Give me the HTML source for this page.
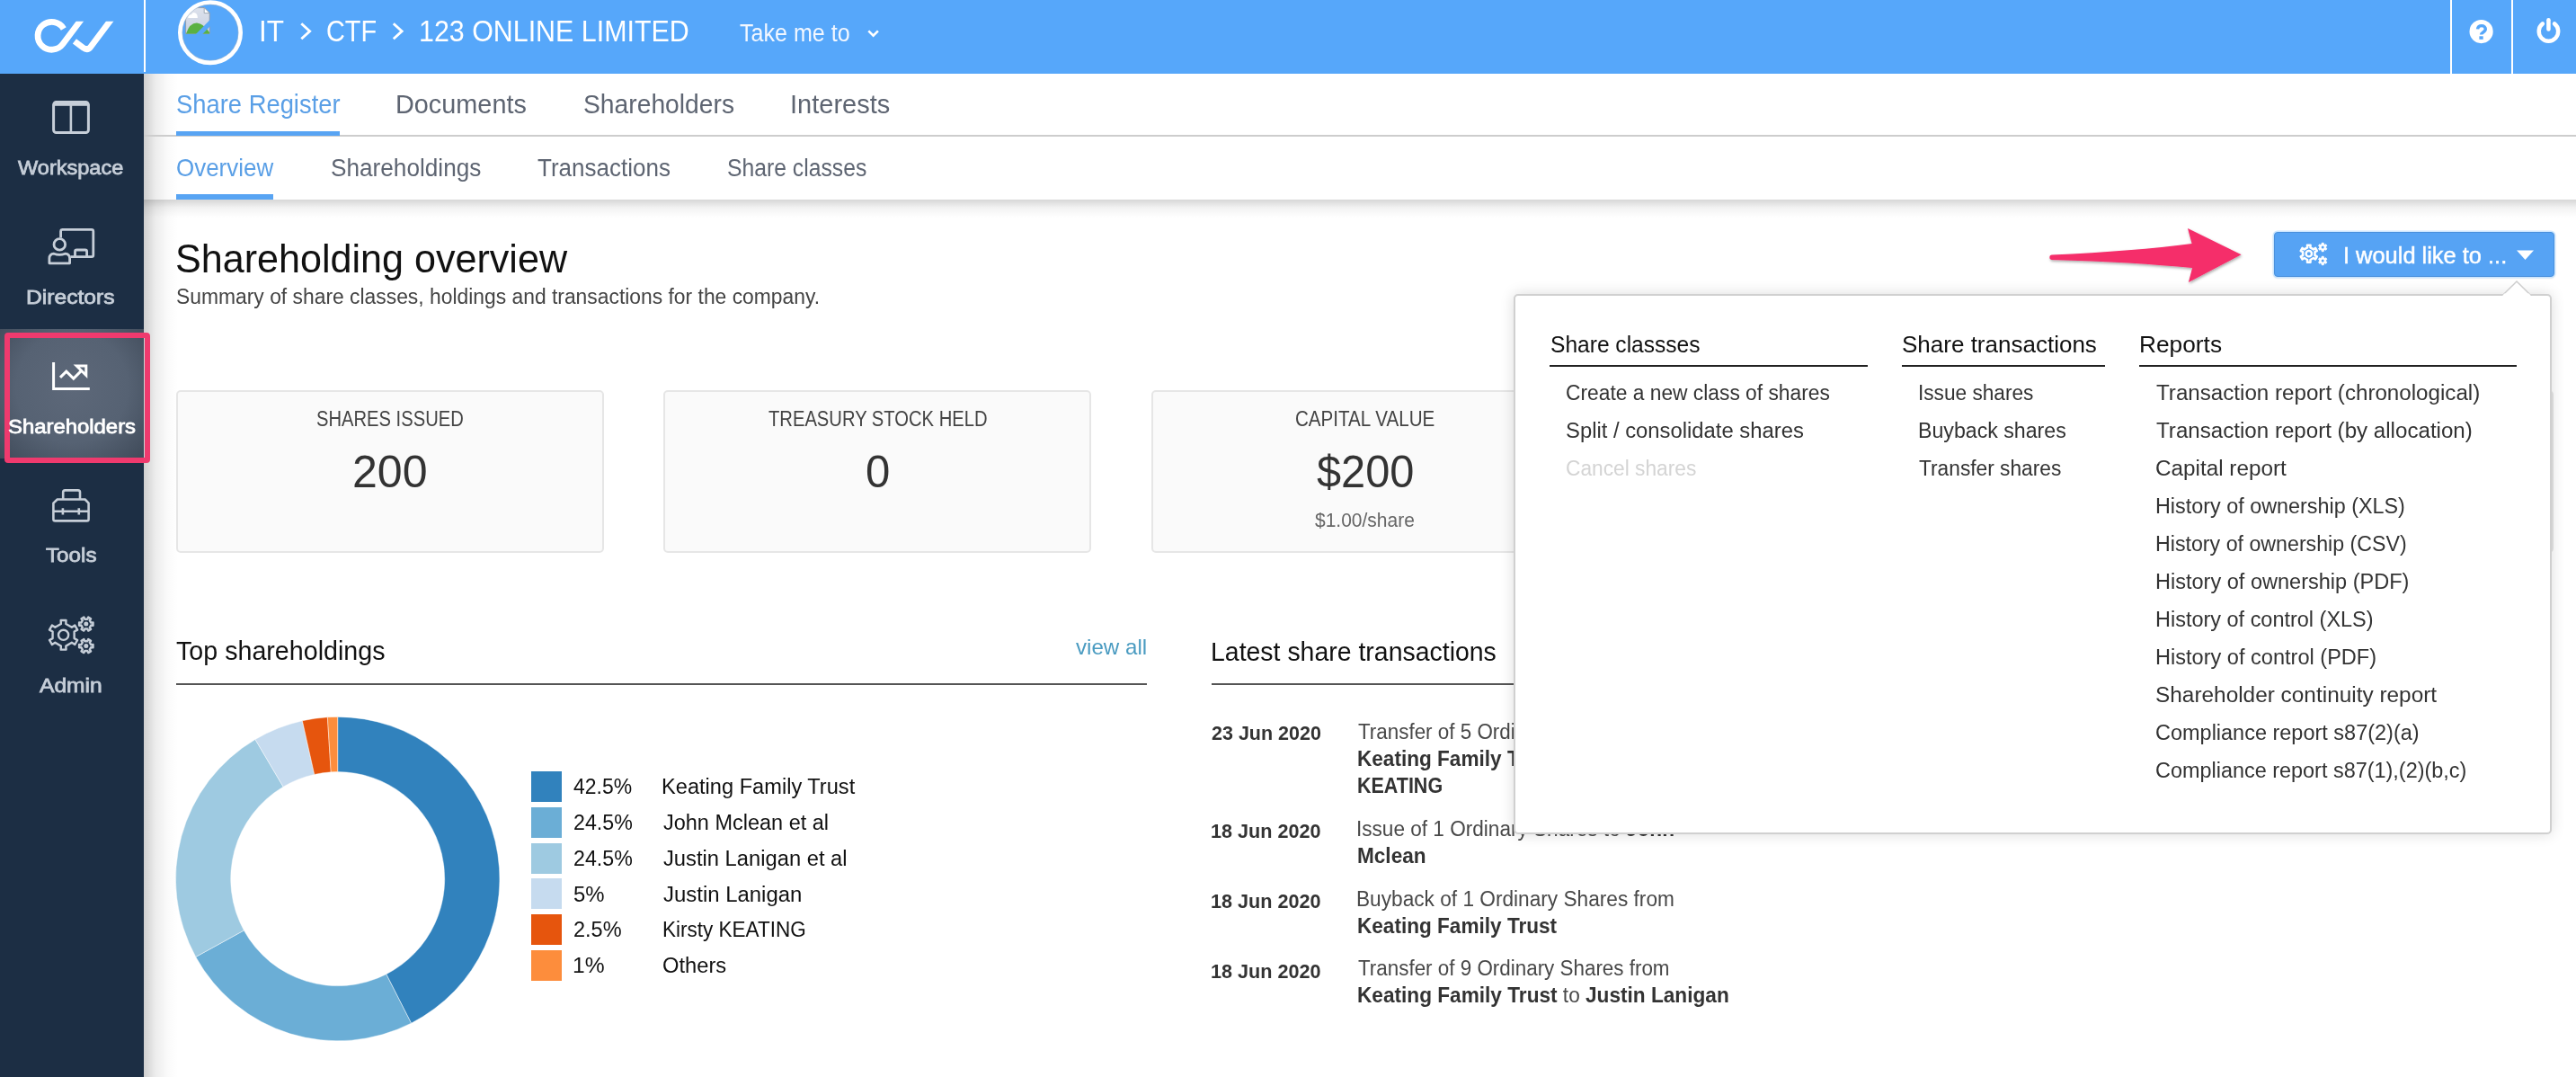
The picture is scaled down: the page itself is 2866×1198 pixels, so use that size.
<!DOCTYPE html><html><head><meta charset="utf-8"><style>
html,body{margin:0;padding:0}
body{width:2866px;height:1198px;overflow:hidden;position:relative;background:#fff;font-family:"Liberation Sans",sans-serif}
.t{position:absolute;white-space:nowrap;transform-origin:0 0}
.t b{font-weight:bold}
.a{position:absolute}
svg.full{position:absolute;left:0;top:0;width:2866px;height:1198px;overflow:visible}
</style></head><body>
<div class="a" style="left:0;top:0;width:2866px;height:82px;background:#56A7FA"></div>
<div class="a" style="left:160px;top:0;width:2px;height:80px;background:#fff"></div>
<div class="a" style="left:2726px;top:0;width:2px;height:82px;background:#fff"></div>
<div class="a" style="left:2794px;top:0;width:2px;height:82px;background:#fff"></div>
<div class="a" style="left:0;top:82px;width:160px;height:1116px;background:#1C2E44"></div>
<div class="a" style="left:0;top:366px;width:160px;height:144px;background:radial-gradient(ellipse at 50% 45%,#5D6879 0%,#566273 55%,#3F4A59 100%)"></div>
<div class="a" style="left:160px;top:82px;width:38px;height:1116px;background:linear-gradient(to right,rgba(0,0,0,0.19),rgba(0,0,0,0.07) 35%,rgba(0,0,0,0.02) 70%,rgba(0,0,0,0))"></div>
<div class="a" style="left:160px;top:150px;width:2706px;height:2px;background:#CDCDCD"></div>
<div class="a" style="left:160px;top:222px;width:2706px;height:20px;background:linear-gradient(to bottom,rgba(0,0,0,0.16),rgba(0,0,0,0.05) 45%,rgba(0,0,0,0))"></div>
<div class="a" style="left:196px;top:146px;width:182px;height:5px;background:#58A4F3"></div>
<div class="a" style="left:196px;top:216px;width:108px;height:6px;background:#58A4F3"></div>
<div class="a" style="left:5px;top:370px;width:150px;height:133px;border:6px solid #EF3A6E;border-radius:4px"></div>
<svg class="full" viewBox="0 0 2866 1198"><defs><clipPath id="lc"><path d="M0,0 L79,0 L79,23.65 L200,23.65 L200,80 L0,80 Z"/></clipPath></defs><g fill="none" stroke="#fff" stroke-width="6.8" stroke-linecap="butt" clip-path="url(#lc)"><path d="M70.8,31.93 A15.45,15.45 0 1 0 69.86,49.07 L92.4,19.0"/><path d="M82.9,45.9 L92.57,53.15 Q97.37,56.75 100.97,51.95 L125.7,19.0"/></g><defs><linearGradient id="bi" x1="0" y1="0" x2="0" y2="1"><stop offset="0" stop-color="#DDE2EC"/><stop offset="1" stop-color="#C9D1E2"/></linearGradient></defs><defs><clipPath id="avc"><circle cx="234" cy="36.2" r="31.6"/></clipPath></defs><g clip-path="url(#avc)"><path d="M206.6,8.6 L227.2,8.6 L233.2,14.6 L233.2,37.4 L206.6,37.4 Z" fill="url(#bi)" stroke="#8E99A6" stroke-width="0.9"/><path d="M227.2,8.6 L227.2,14.6 L233.2,14.6 Z" fill="#fff" stroke="#8E99A6" stroke-width="0.8"/><path d="M209.3,19.9 Q209.3,16 212.8,16.3 Q214.3,13.3 217.4,14.4 Q219.9,15.6 219.8,19.9 Z" fill="#fff"/><path d="M207,37.4 Q211,25.3 219,25.4 Q226.5,26 233,36 L233,37.4 Z" fill="#5AB142"/><path d="M217.6,38.2 L234,21.8 L234,29.1 L225,38.2 Z" fill="#56A7FA"/></g><circle cx="234" cy="36.2" r="31.2" fill="none" stroke="#A9B8C8" stroke-width="1" opacity="0.7"/><circle cx="234" cy="36.2" r="33.7" fill="none" stroke="#fff" stroke-width="4.6"/><g fill="none" stroke="#fff" stroke-width="2.9" stroke-linecap="butt" stroke-linejoin="miter"><path d="M335.3,26.2 L344.6,34.7 L335.3,43.2"/><path d="M437.8,26.2 L447.1,34.7 L437.8,43.2"/></g><path d="M966.3,34.3 L971.6,39.6 L976.9,34.3" fill="none" stroke="#fff" stroke-width="2.6"/><circle cx="2760.6" cy="35.1" r="13.1" fill="#fff"/><path d="M2756.5,32.4 C2756.8,30 2758.6,28.6 2761,28.6 C2763.6,28.6 2765.3,30.2 2765.3,32.3 C2765.3,34.3 2763.9,35.2 2762.6,36 C2761.3,36.8 2760.5,37.3 2760.5,38.6" fill="none" stroke="#56A7FA" stroke-width="3.4"/><rect x="2758.4" y="40.3" width="4.3" height="3.5" fill="#56A7FA"/><path d="M2828.85,26.4 A10.75,10.75 0 1 0 2842.05,26.4" fill="none" stroke="#fff" stroke-width="4.5" stroke-linecap="round"/><path d="M2835.45,22.3 L2835.45,32.6" fill="none" stroke="#fff" stroke-width="4.5" stroke-linecap="round"/><g fill="none" stroke="#C6CED8" stroke-width="3"><rect x="59.6" y="113.6" width="38.8" height="34" rx="3"/><rect x="59.6" y="113.6" width="38.8" height="4.2" fill="#C6CED8" stroke="none"/><path d="M78.9,116 L78.9,146" stroke-width="2.6"/></g><g fill="none" stroke="#C6CED8" stroke-width="2.8" stroke-linejoin="round"><path d="M67.6,264.5 L67.6,257.2 Q67.6,255.3 69.5,255.3 L102,255.3 Q103.8,255.3 103.8,257.2 L103.8,283.8 Q103.8,285.7 102,285.7 L78.6,285.7"/><circle cx="66.3" cy="271.9" r="6.3"/><path d="M54.9,292.8 L54.9,287.5 Q54.9,282.6 60,282.2 Q66.2,284.6 72.4,282.2 Q77.6,282.6 77.6,287.5 L77.6,292.8 Z"/><path d="M83.5,285.5 L83.5,279.8 Q83.5,278 85.3,278 L94.8,278 Q96.6,278 96.6,279.8 L96.6,285.5"/></g><g fill="none" stroke="#fff" stroke-width="3" stroke-linejoin="miter"><path d="M59.6,403 L59.6,432.6 L99.8,432.6"/><path d="M67,419.9 L73.8,413.2 L81.8,421.1 L91,411.9"/><path d="M85.2,407 L95.8,407 L95.8,417.5 Z"/></g><g fill="none" stroke="#C6CED8" stroke-width="2.6" stroke-linejoin="round"><path d="M70.2,555.3 L70.2,547.6 Q70.2,545.4 72.4,545.4 L86.8,545.4 Q89,545.4 89,547.6 L89,555.3"/><path d="M63.8,555.5 L94.6,555.5 L98.6,559.6 L98.6,577.4 Q98.6,579.4 96.6,579.4 L61.4,579.4 Q59.4,579.4 59.4,577.4 L59.4,559.6 Z"/><path d="M59.4,568.7 L98.6,568.7 M69.9,565.2 L69.9,572.6 M87.8,565.2 L87.8,572.6"/></g><path d="M67.85,694.00 L67.69,689.96 L73.51,689.96 L73.35,694.00 L79.87,697.77 L83.30,695.61 L86.21,700.64 L82.62,702.53 L82.62,710.07 L86.21,711.96 L83.30,716.99 L79.87,714.83 L73.35,718.60 L73.51,722.64 L67.69,722.64 L67.85,718.60 L61.33,714.83 L57.90,716.99 L54.99,711.96 L58.58,710.07 L58.58,702.53 L54.99,700.64 L57.90,695.61 L61.33,697.77 Z" fill="none" stroke="#C6CED8" stroke-width="2.40" stroke-linejoin="round"/><circle cx="70.60" cy="706.30" r="5.60" fill="none" stroke="#C6CED8" stroke-width="2.40"/><path d="M101.21,692.65 L103.53,692.46 L103.53,695.74 L101.21,695.55 L99.76,698.06 L101.09,699.97 L98.24,701.61 L97.25,699.51 L94.35,699.51 L93.36,701.61 L90.51,699.97 L91.84,698.06 L90.39,695.55 L88.07,695.74 L88.07,692.46 L90.39,692.65 L91.84,690.14 L90.51,688.23 L93.36,686.59 L94.35,688.69 L97.25,688.69 L98.24,686.59 L101.09,688.23 L99.76,690.14 Z" fill="none" stroke="#C6CED8" stroke-width="2.40" stroke-linejoin="round"/><circle cx="95.80" cy="694.10" r="2.50" fill="#C6CED8"/><path d="M101.21,717.15 L103.53,716.96 L103.53,720.24 L101.21,720.05 L99.76,722.56 L101.09,724.47 L98.24,726.11 L97.25,724.01 L94.35,724.01 L93.36,726.11 L90.51,724.47 L91.84,722.56 L90.39,720.05 L88.07,720.24 L88.07,716.96 L90.39,717.15 L91.84,714.64 L90.51,712.73 L93.36,711.09 L94.35,713.19 L97.25,713.19 L98.24,711.09 L101.09,712.73 L99.76,714.64 Z" fill="none" stroke="#C6CED8" stroke-width="2.40" stroke-linejoin="round"/><circle cx="95.80" cy="718.60" r="2.50" fill="#C6CED8"/></svg>
<div class="t" style="left:20.24px;top:174.89px;font-size:22.69px;line-height:22.69px;color:#C6CED8;transform:scaleX(1.0375);"><b style="font-weight:normal;-webkit-text-stroke:0.80px currentColor;">Workspace</b></div>
<div class="t" style="left:29.39px;top:318.99px;font-size:22.69px;line-height:22.69px;color:#C6CED8;transform:scaleX(1.0862);"><b style="font-weight:normal;-webkit-text-stroke:0.80px currentColor;">Directors</b></div>
<div class="t" style="left:9.29px;top:463.29px;font-size:22.69px;line-height:22.69px;color:#FFFFFF;transform:scaleX(1.0526);"><b style="font-weight:normal;-webkit-text-stroke:0.80px currentColor;">Shareholders</b></div>
<div class="t" style="left:50.81px;top:606.49px;font-size:22.69px;line-height:22.69px;color:#C6CED8;transform:scaleX(1.0677);"><b style="font-weight:normal;-webkit-text-stroke:0.80px currentColor;">Tools</b></div>
<div class="t" style="left:44.35px;top:751.49px;font-size:22.69px;line-height:22.69px;color:#C6CED8;transform:scaleX(1.0843);"><b style="font-weight:normal;-webkit-text-stroke:0.80px currentColor;">Admin</b></div>
<div class="t" style="left:287.59px;top:18.05px;font-size:33.60px;line-height:33.60px;color:#fff;transform:scaleX(0.9385);">IT</div>
<div class="t" style="left:362.74px;top:18.05px;font-size:33.60px;line-height:33.60px;color:#fff;transform:scaleX(0.8604);">CTF</div>
<div class="t" style="left:465.64px;top:17.85px;font-size:33.60px;line-height:33.60px;color:#fff;transform:scaleX(0.9053);">123 ONLINE LIMITED</div>
<div class="t" style="left:823.47px;top:22.11px;font-size:28.22px;line-height:28.22px;color:#F2F7FF;transform:scaleX(0.8891);">Take me to</div>
<div class="t" style="left:195.66px;top:102.22px;font-size:28.80px;line-height:28.80px;color:#5A9FE6;transform:scaleX(0.9506);">Share Register</div>
<div class="t" style="left:440.10px;top:102.22px;font-size:28.80px;line-height:28.80px;color:#5E6572;transform:scaleX(1.0014);">Documents</div>
<div class="t" style="left:648.72px;top:102.22px;font-size:28.80px;line-height:28.80px;color:#5E6572;transform:scaleX(0.9811);">Shareholders</div>
<div class="t" style="left:878.78px;top:102.22px;font-size:28.80px;line-height:28.80px;color:#5E6572;transform:scaleX(1.0075);">Interests</div>
<div class="t" style="left:195.73px;top:173.22px;font-size:27.49px;line-height:27.49px;color:#5A9FE6;transform:scaleX(0.9444);">Overview</div>
<div class="t" style="left:367.51px;top:173.22px;font-size:27.49px;line-height:27.49px;color:#5E6572;transform:scaleX(0.9522);">Shareholdings</div>
<div class="t" style="left:598.38px;top:173.22px;font-size:27.49px;line-height:27.49px;color:#5E6572;transform:scaleX(0.9470);">Transactions</div>
<div class="t" style="left:809.48px;top:173.22px;font-size:27.49px;line-height:27.49px;color:#5E6572;transform:scaleX(0.8997);">Share classes</div>
<div class="t" style="left:194.69px;top:264.60px;font-size:45.24px;line-height:45.24px;color:#111;transform:scaleX(0.9528);">Shareholding overview</div>
<div class="t" style="left:195.54px;top:317.66px;font-size:24.73px;line-height:24.73px;color:#444;transform:scaleX(0.9246);">Summary of share classes, holdings and transactions for the company.</div>
<div class="a" style="left:196.00px;top:434px;width:472px;height:176.5px;border:2px solid #E6E6E6;border-radius:5px;background:#FAFAFA"></div>
<div class="t" style="left:352.04px;top:454.03px;font-size:24.29px;line-height:24.29px;color:#444;transform:scaleX(0.8312);">SHARES ISSUED</div>
<div class="t" style="left:391.87px;top:499.79px;font-size:50.56px;line-height:50.56px;color:#333;transform:scaleX(0.9912);">200</div>
<div class="a" style="left:738.25px;top:434px;width:472px;height:176.5px;border:2px solid #E6E6E6;border-radius:5px;background:#FAFAFA"></div>
<div class="t" style="left:854.64px;top:454.03px;font-size:24.29px;line-height:24.29px;color:#444;transform:scaleX(0.8318);">TREASURY STOCK HELD</div>
<div class="t" style="left:962.60px;top:499.79px;font-size:50.56px;line-height:50.56px;color:#333;transform:scaleX(0.9712);">0</div>
<div class="a" style="left:1280.50px;top:434px;width:472px;height:176.5px;border:2px solid #E6E6E6;border-radius:5px;background:#FAFAFA"></div>
<div class="t" style="left:1440.69px;top:454.03px;font-size:24.29px;line-height:24.29px;color:#444;transform:scaleX(0.8481);">CAPITAL VALUE</div>
<div class="t" style="left:1464.92px;top:499.79px;font-size:50.56px;line-height:50.56px;color:#333;transform:scaleX(0.9646);">$200</div>
<div class="t" style="left:1463.42px;top:567.39px;font-size:22.69px;line-height:22.69px;color:#666;transform:scaleX(0.9250);">$1.00/share</div>
<div class="a" style="left:1822.75px;top:434px;width:472px;height:176.5px;border:2px solid #E6E6E6;border-radius:5px;background:#FAFAFA"></div>
<div class="a" style="left:2365.00px;top:434px;width:472px;height:176.5px;border:2px solid #E6E6E6;border-radius:5px;background:#FAFAFA"></div>
<div class="t" style="left:196.42px;top:709.10px;font-size:29.82px;line-height:29.82px;color:#111;transform:scaleX(0.9609);">Top shareholdings</div>
<div class="t" style="left:1197.30px;top:708.27px;font-size:24.01px;line-height:24.01px;color:#4A9BC1;transform:scaleX(1.0052);">view all</div>
<div class="a" style="left:196px;top:760px;width:1080px;height:2px;background:#555"></div>
<div class="t" style="left:1346.71px;top:709.75px;font-size:29.82px;line-height:29.82px;color:#111;transform:scaleX(0.9542);">Latest share transactions</div>
<div class="a" style="left:1348px;top:760px;width:1488px;height:2px;background:#555"></div>
<svg class="full" viewBox="0 0 2866 1198"><path d="M375.70,797.40 A180.20,180.20 0 0 1 457.51,1138.16 L429.72,1083.63 A119.00,119.00 0 0 0 375.70,858.60 Z" fill="#3182BD" stroke="#fff" stroke-width="0.45"/><path d="M457.51,1138.16 A180.20,180.20 0 0 1 217.79,1064.41 L271.42,1034.93 A119.00,119.00 0 0 0 429.72,1083.63 Z" fill="#6BAED6" stroke="#fff" stroke-width="0.45"/><path d="M217.79,1064.41 A180.20,180.20 0 0 1 283.97,822.49 L315.12,875.17 A119.00,119.00 0 0 0 271.42,1034.93 Z" fill="#9ECAE1" stroke="#fff" stroke-width="0.45"/><path d="M283.97,822.49 A180.20,180.20 0 0 1 336.39,801.74 L349.74,861.47 A119.00,119.00 0 0 0 315.12,875.17 Z" fill="#C6DBEF" stroke="#fff" stroke-width="0.45"/><path d="M336.39,801.74 A180.20,180.20 0 0 1 364.39,797.76 L368.23,858.83 A119.00,119.00 0 0 0 349.74,861.47 Z" fill="#E6550D" stroke="#fff" stroke-width="0.45"/><path d="M364.39,797.76 A180.20,180.20 0 0 1 375.70,797.40 L375.70,858.60 A119.00,119.00 0 0 0 368.23,858.83 Z" fill="#FD8D3C" stroke="#fff" stroke-width="0.45"/></svg>
<div class="a" style="left:591px;top:858.00px;width:34px;height:34px;background:#3182BD"></div>
<div class="t" style="left:638.47px;top:864.43px;font-size:23.71px;line-height:23.71px;color:#111;transform:scaleX(0.9681);">42.5%</div>
<div class="t" style="left:736.46px;top:864.43px;font-size:23.71px;line-height:23.71px;color:#111;transform:scaleX(0.9963);">Keating Family Trust</div>
<div class="a" style="left:591px;top:897.76px;width:34px;height:34px;background:#6BAED6"></div>
<div class="t" style="left:637.78px;top:904.19px;font-size:23.71px;line-height:23.71px;color:#111;transform:scaleX(0.9785);">24.5%</div>
<div class="t" style="left:737.95px;top:904.19px;font-size:23.71px;line-height:23.71px;color:#111;transform:scaleX(0.9907);">John Mclean et al</div>
<div class="a" style="left:591px;top:937.52px;width:34px;height:34px;background:#9ECAE1"></div>
<div class="t" style="left:637.78px;top:943.95px;font-size:23.71px;line-height:23.71px;color:#111;transform:scaleX(0.9785);">24.5%</div>
<div class="t" style="left:737.95px;top:943.95px;font-size:23.71px;line-height:23.71px;color:#111;transform:scaleX(1.0015);">Justin Lanigan et al</div>
<div class="a" style="left:591px;top:977.28px;width:34px;height:34px;background:#C6DBEF"></div>
<div class="t" style="left:638.04px;top:983.71px;font-size:23.71px;line-height:23.71px;color:#111;transform:scaleX(1.0092);">5%</div>
<div class="t" style="left:737.95px;top:983.71px;font-size:23.71px;line-height:23.71px;color:#111;transform:scaleX(1.0099);">Justin Lanigan</div>
<div class="a" style="left:591px;top:1017.04px;width:34px;height:34px;background:#E6550D"></div>
<div class="t" style="left:637.76px;top:1023.47px;font-size:23.71px;line-height:23.71px;color:#111;transform:scaleX(0.9923);">2.5%</div>
<div class="t" style="left:736.55px;top:1023.47px;font-size:23.71px;line-height:23.71px;color:#111;transform:scaleX(0.9501);">Kirsty KEATING</div>
<div class="a" style="left:591px;top:1056.80px;width:34px;height:34px;background:#FD8D3C"></div>
<div class="t" style="left:637.08px;top:1063.23px;font-size:23.71px;line-height:23.71px;color:#111;transform:scaleX(1.0380);">1%</div>
<div class="t" style="left:737.25px;top:1063.23px;font-size:23.71px;line-height:23.71px;color:#111;transform:scaleX(1.0014);">Others</div>
<div class="t" style="left:1347.98px;top:805.36px;font-size:22.25px;line-height:22.25px;color:#333;transform:scaleX(0.9663);"><b>23 Jun 2020</b></div>
<div class="t" style="left:1347.29px;top:913.76px;font-size:22.25px;line-height:22.25px;color:#333;transform:scaleX(0.9718);"><b>18 Jun 2020</b></div>
<div class="t" style="left:1347.29px;top:992.46px;font-size:22.25px;line-height:22.25px;color:#333;transform:scaleX(0.9718);"><b>18 Jun 2020</b></div>
<div class="t" style="left:1347.29px;top:1069.76px;font-size:22.25px;line-height:22.25px;color:#333;transform:scaleX(0.9718);"><b>18 Jun 2020</b></div>
<div class="t" style="left:1510.69px;top:802.16px;font-size:24.15px;line-height:24.15px;color:#484848;transform:scaleX(0.9280);">Transfer of 5 Ordinary Shares from</div>
<div class="t" style="left:1509.66px;top:831.76px;font-size:24.15px;line-height:24.15px;color:#484848;transform:scaleX(0.9354);"><b style="color:#333">Keating Family Trust</b> to <b style="color:#333">Kirsty</b></div>
<div class="t" style="left:1509.73px;top:861.76px;font-size:24.15px;line-height:24.15px;color:#484848;transform:scaleX(0.8900);"><b style="color:#333">KEATING</b></div>
<div class="t" style="left:1509.10px;top:909.96px;font-size:24.15px;line-height:24.15px;color:#484848;transform:scaleX(0.9354);">Issue of 1 Ordinary Shares to <b style="color:#333">John</b></div>
<div class="t" style="left:1509.66px;top:940.16px;font-size:24.15px;line-height:24.15px;color:#484848;transform:scaleX(0.9354);"><b style="color:#333">Mclean</b></div>
<div class="t" style="left:1509.37px;top:987.56px;font-size:24.15px;line-height:24.15px;color:#484848;transform:scaleX(0.9386);">Buyback of 1 Ordinary Shares from</div>
<div class="t" style="left:1509.66px;top:1017.66px;font-size:24.15px;line-height:24.15px;color:#484848;transform:scaleX(0.9354);"><b style="color:#333">Keating Family Trust</b></div>
<div class="t" style="left:1510.69px;top:1065.16px;font-size:24.15px;line-height:24.15px;color:#484848;transform:scaleX(0.9280);">Transfer of 9 Ordinary Shares from</div>
<div class="t" style="left:1509.65px;top:1094.56px;font-size:24.15px;line-height:24.15px;color:#484848;transform:scaleX(0.9374);"><b style="color:#333">Keating Family Trust</b> to <b style="color:#333">Justin Lanigan</b></div>
<svg class="full" viewBox="0 0 2866 1198"><defs><filter id="sh" x="-10%" y="-30%" width="120%" height="160%"><feDropShadow dx="0.8" dy="1.6" stdDeviation="1.4" flood-color="#000" flood-opacity="0.35"/></filter></defs><path filter="url(#sh)" d="M2283,283.6 Q2375,279.5 2438.6,271.1 L2434,253.9 L2493.6,283.2 L2434.9,313.9 L2439.1,298.1 Q2375,291.5 2283,288.9 A2.65,2.65 0 0 1 2283,283.6 Z" fill="#F52D6B"/></svg>
<div class="a" style="left:2530px;top:258px;width:310px;height:48px;background:#56A3F4;border:1px solid #4A90DC;border-radius:4px;box-shadow:0 0 0 1.5px rgba(200,228,255,0.9),0 1px 3px rgba(0,0,0,0.15)"></div>
<svg class="full" viewBox="0 0 2866 1198"><path d="M2567.17,275.39 L2567.00,272.77 L2570.60,272.77 L2570.43,275.39 L2573.88,277.38 L2576.07,275.93 L2577.87,279.04 L2575.51,280.21 L2575.51,284.19 L2577.87,285.36 L2576.07,288.47 L2573.88,287.02 L2570.43,289.01 L2570.60,291.63 L2567.00,291.63 L2567.17,289.01 L2563.72,287.02 L2561.53,288.47 L2559.73,285.36 L2562.09,284.19 L2562.09,280.21 L2559.73,279.04 L2561.53,275.93 L2563.72,277.38 Z" fill="none" stroke="#fff" stroke-width="2.5" stroke-linejoin="round"/><circle cx="2568.80" cy="282.20" r="3.2" fill="none" stroke="#fff" stroke-width="2.4"/><path d="M2583.27,271.52 L2583.20,270.30 L2585.20,270.30 L2585.13,271.52 L2586.75,272.45 L2587.77,271.79 L2588.77,273.52 L2587.68,274.07 L2587.68,275.93 L2588.77,276.48 L2587.77,278.21 L2586.75,277.55 L2585.13,278.48 L2585.20,279.70 L2583.20,279.70 L2583.27,278.48 L2581.65,277.55 L2580.63,278.21 L2579.63,276.48 L2580.72,275.93 L2580.72,274.07 L2579.63,273.52 L2580.63,271.79 L2581.65,272.45 Z" fill="#fff" stroke="#fff" stroke-width="1" stroke-linejoin="round"/><circle cx="2584.2" cy="275.00" r="1.5" fill="#56A3F4"/><path d="M2583.27,286.52 L2583.20,285.30 L2585.20,285.30 L2585.13,286.52 L2586.75,287.45 L2587.77,286.79 L2588.77,288.52 L2587.68,289.07 L2587.68,290.93 L2588.77,291.48 L2587.77,293.21 L2586.75,292.55 L2585.13,293.48 L2585.20,294.70 L2583.20,294.70 L2583.27,293.48 L2581.65,292.55 L2580.63,293.21 L2579.63,291.48 L2580.72,290.93 L2580.72,289.07 L2579.63,288.52 L2580.63,286.79 L2581.65,287.45 Z" fill="#fff" stroke="#fff" stroke-width="1" stroke-linejoin="round"/><circle cx="2584.2" cy="290.00" r="1.5" fill="#56A3F4"/><path d="M2800,278.6 L2819,278.6 L2809.5,289 Z" fill="#fff"/></svg>
<div class="t" style="left:2606.58px;top:271.99px;font-size:25.16px;line-height:25.16px;color:#fff;transform:scaleX(1.0102);-webkit-text-stroke:0.45px #fff;">I would like to ...</div>
<div class="a" style="left:1684px;top:326.5px;width:1151px;height:597px;background:#fff;border:2px solid #D0D0D0;border-radius:5px;box-shadow:0 0 16px rgba(0,0,0,0.14)"></div>
<svg class="full" viewBox="0 0 2866 1198"><path d="M2784.6,328.3 L2800,313.0 L2815.4,328.3 Z" fill="#fff" stroke="#CDCDCD" stroke-width="1.5"/><path d="M2786.2,326.4 L2813.8,326.4 L2815.8,329 L2784.2,329 Z" fill="#fff"/></svg>
<div class="t" style="left:1724.54px;top:370.19px;font-size:26.47px;line-height:26.47px;color:#111;transform:scaleX(0.9279);">Share classses</div>
<div class="t" style="left:2116.37px;top:370.19px;font-size:26.47px;line-height:26.47px;color:#111;transform:scaleX(0.9826);">Share transactions</div>
<div class="t" style="left:2379.56px;top:370.19px;font-size:26.47px;line-height:26.47px;color:#111;transform:scaleX(0.9933);">Reports</div>
<div class="a" style="left:1724px;top:406px;width:354px;height:2px;background:#222"></div>
<div class="a" style="left:2116px;top:406px;width:226px;height:2px;background:#222"></div>
<div class="a" style="left:2380px;top:406px;width:420px;height:2px;background:#222"></div>
<div class="t" style="left:1741.80px;top:426.43px;font-size:23.71px;line-height:23.71px;color:#333;transform:scaleX(0.9614);">Create a new class of shares</div>
<div class="t" style="left:1741.84px;top:468.35px;font-size:23.71px;line-height:23.71px;color:#333;transform:scaleX(1.0050);">Split / consolidate shares</div>
<div class="t" style="left:1741.80px;top:510.27px;font-size:23.71px;line-height:23.71px;color:#D4D4D4;transform:scaleX(0.9592);">Cancel shares</div>
<div class="t" style="left:2133.85px;top:426.43px;font-size:23.71px;line-height:23.71px;color:#333;transform:scaleX(0.9558);">Issue shares</div>
<div class="t" style="left:2134.09px;top:468.35px;font-size:23.71px;line-height:23.71px;color:#333;transform:scaleX(0.9771);">Buyback shares</div>
<div class="t" style="left:2135.47px;top:510.27px;font-size:23.71px;line-height:23.71px;color:#333;transform:scaleX(0.9591);">Transfer shares</div>
<div class="t" style="left:2398.94px;top:426.43px;font-size:23.71px;line-height:23.71px;color:#333;transform:scaleX(1.0191);">Transaction report (chronological)</div>
<div class="t" style="left:2398.94px;top:468.35px;font-size:23.71px;line-height:23.71px;color:#333;transform:scaleX(1.0180);">Transaction report (by allocation)</div>
<div class="t" style="left:2398.22px;top:510.27px;font-size:23.71px;line-height:23.71px;color:#333;transform:scaleX(1.0249);">Capital report</div>
<div class="t" style="left:2397.58px;top:552.19px;font-size:23.71px;line-height:23.71px;color:#333;transform:scaleX(0.9856);">History of ownership (XLS)</div>
<div class="t" style="left:2397.59px;top:594.11px;font-size:23.71px;line-height:23.71px;color:#333;transform:scaleX(0.9788);">History of ownership (CSV)</div>
<div class="t" style="left:2397.56px;top:636.03px;font-size:23.71px;line-height:23.71px;color:#333;transform:scaleX(0.9925);">History of ownership (PDF)</div>
<div class="t" style="left:2397.57px;top:677.95px;font-size:23.71px;line-height:23.71px;color:#333;transform:scaleX(0.9901);">History of control (XLS)</div>
<div class="t" style="left:2397.56px;top:719.87px;font-size:23.71px;line-height:23.71px;color:#333;transform:scaleX(0.9939);">History of control (PDF)</div>
<div class="t" style="left:2398.32px;top:761.79px;font-size:23.71px;line-height:23.71px;color:#333;transform:scaleX(1.0287);">Shareholder continuity report</div>
<div class="t" style="left:2398.26px;top:803.71px;font-size:23.71px;line-height:23.71px;color:#333;transform:scaleX(0.9905);">Compliance report s87(2)(a)</div>
<div class="t" style="left:2398.26px;top:845.63px;font-size:23.71px;line-height:23.71px;color:#333;transform:scaleX(0.9885);">Compliance report s87(1),(2)(b,c)</div>
</body></html>
